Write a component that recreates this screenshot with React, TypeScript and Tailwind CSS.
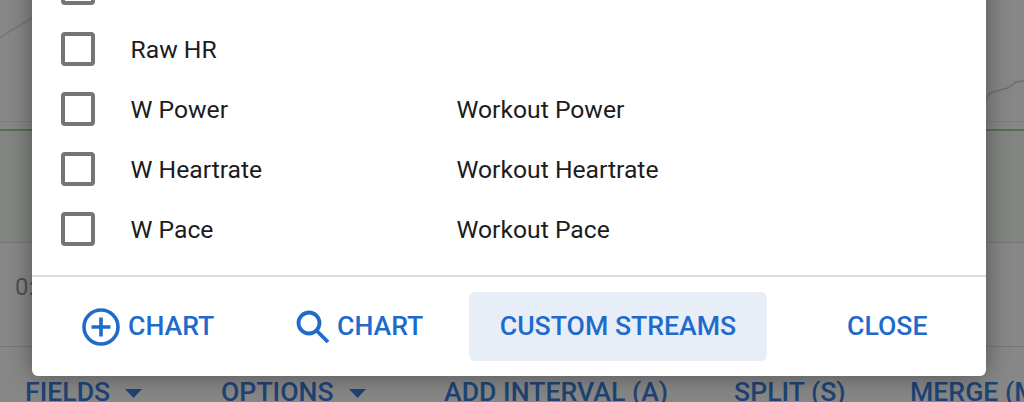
import React from "react";

const rows: [string, string][] = [
  ["Raw HR", ""],
  ["W Power", "Workout Power"],
  ["W Heartrate", "Workout Heartrate"],
  ["W Pace", "Workout Pace"],
];

function Box() {
  return <div className="w-[34px] h-[34px] shrink-0 rounded-[4px] border-[4px] border-[#757575] bg-white" />;
}

function Caret() {
  return (
    <svg width="17" height="9" viewBox="0 0 17 9" className="ml-[15px] mt-[2px] shrink-0">
      <path d="M0 0h17L8.5 9z" fill="#1e4474" />
    </svg>
  );
}

export default function App() {
  return (
    <div className="relative w-[1024px] h-[402px] overflow-hidden bg-[#878787] font-['Roboto',sans-serif]">
      {/* page behind the dialog */}
      <div className="h-[122px] border-b border-[#7d7d7d]" />
      <div className="h-[7px]" />
      <div className="h-[2px] bg-[#566f52]" />
      <div className="h-[112px] bg-[#828582] border-b border-[#767676]" />
      <div className="h-[104px] border-b border-[#767676] pl-[15px] pt-[26px] text-[24px] text-[#505050]">0:</div>
      <div className="flex items-center pl-[25px] h-[54px] pt-[36px] text-[26.67px] font-medium text-[#1e4474] whitespace-nowrap">
        <span className="flex items-center w-[196px] shrink-0">FIELDS<Caret /></span>
        <span className="flex items-center w-[223px] shrink-0">OPTIONS<Caret /></span>
        <span className="w-[290px] shrink-0">ADD INTERVAL (A)</span>
        <span className="w-[176px] shrink-0">SPLIT (S)</span>
        <span className="shrink-0">MERGE (M)</span>
      </div>
      <svg className="absolute left-0 top-0" width="1024" height="130" viewBox="0 0 1024 130" fill="none">
        <path d="M0 38 L12 30 L22 24 L32 18" stroke="#777" strokeWidth="1.5" />
        <path d="M986 100 L990 93 L1000 90 L1008 88 L1016 82 L1024 81" stroke="#6f6f6f" strokeWidth="1.5" />
      </svg>

      {/* dialog */}
      <div className="absolute left-[32px] top-[-40px] w-[954px] h-[416px] rounded-[6px] bg-white shadow-[0_0_24px_rgba(0,0,0,0.4)] flex flex-col">
        <div className="flex-1 pl-[29px]">
          <div className="h-[45px] relative">
            <div className="absolute left-0 bottom-0 w-[34px] h-[34px] rounded-[4px] border-[4px] border-[#757575]" />
          </div>
          <div className="pt-[27px] flex flex-col gap-[26px]">
            {rows.map(([a, b]) => (
              <div key={a} className="flex items-center h-[34px] text-[24.7px] text-[#1c1c1c]">
                <Box />
                <span className="ml-[35.5px] w-[326px] pt-[2px]">{a}</span>
                <span className="pt-[2px]">{b}</span>
              </div>
            ))}
          </div>
        </div>
        <div className="h-[101px] border-t-2 border-[#dcdcdc] flex items-center text-[26.67px] font-medium text-[#1f6bcb] whitespace-nowrap">
          <span className="flex items-center ml-[50px] w-[214px]">
            <svg width="38" height="38" viewBox="0 0 38 38" fill="none" stroke="#1f6bcb" strokeWidth="3.6" className="mr-[8px]">
              <circle cx="19" cy="19" r="17" />
              <path d="M19 9.5v19M9.5 19h19" />
            </svg>
            <span className="mt-[-2px]">CHART</span>
          </span>
          <span className="flex items-center w-[173px]">
            <svg width="34" height="34" viewBox="0 0 34 34" fill="none" stroke="#1f6bcb" strokeWidth="3.8" className="mr-[7px]">
              <circle cx="13" cy="13" r="10.5" />
              <path d="M21 21 L32 32" />
            </svg>
            <span className="mt-[-2px]">CHART</span>
          </span>
          <span className="flex items-center justify-center w-[298px] h-[69px] rounded-[6px] bg-[#e8eef8] pb-[2px]">CUSTOM STREAMS</span>
          <span className="ml-[80px] mt-[-2px]">CLOSE</span>
        </div>
      </div>
    </div>
  );
}
